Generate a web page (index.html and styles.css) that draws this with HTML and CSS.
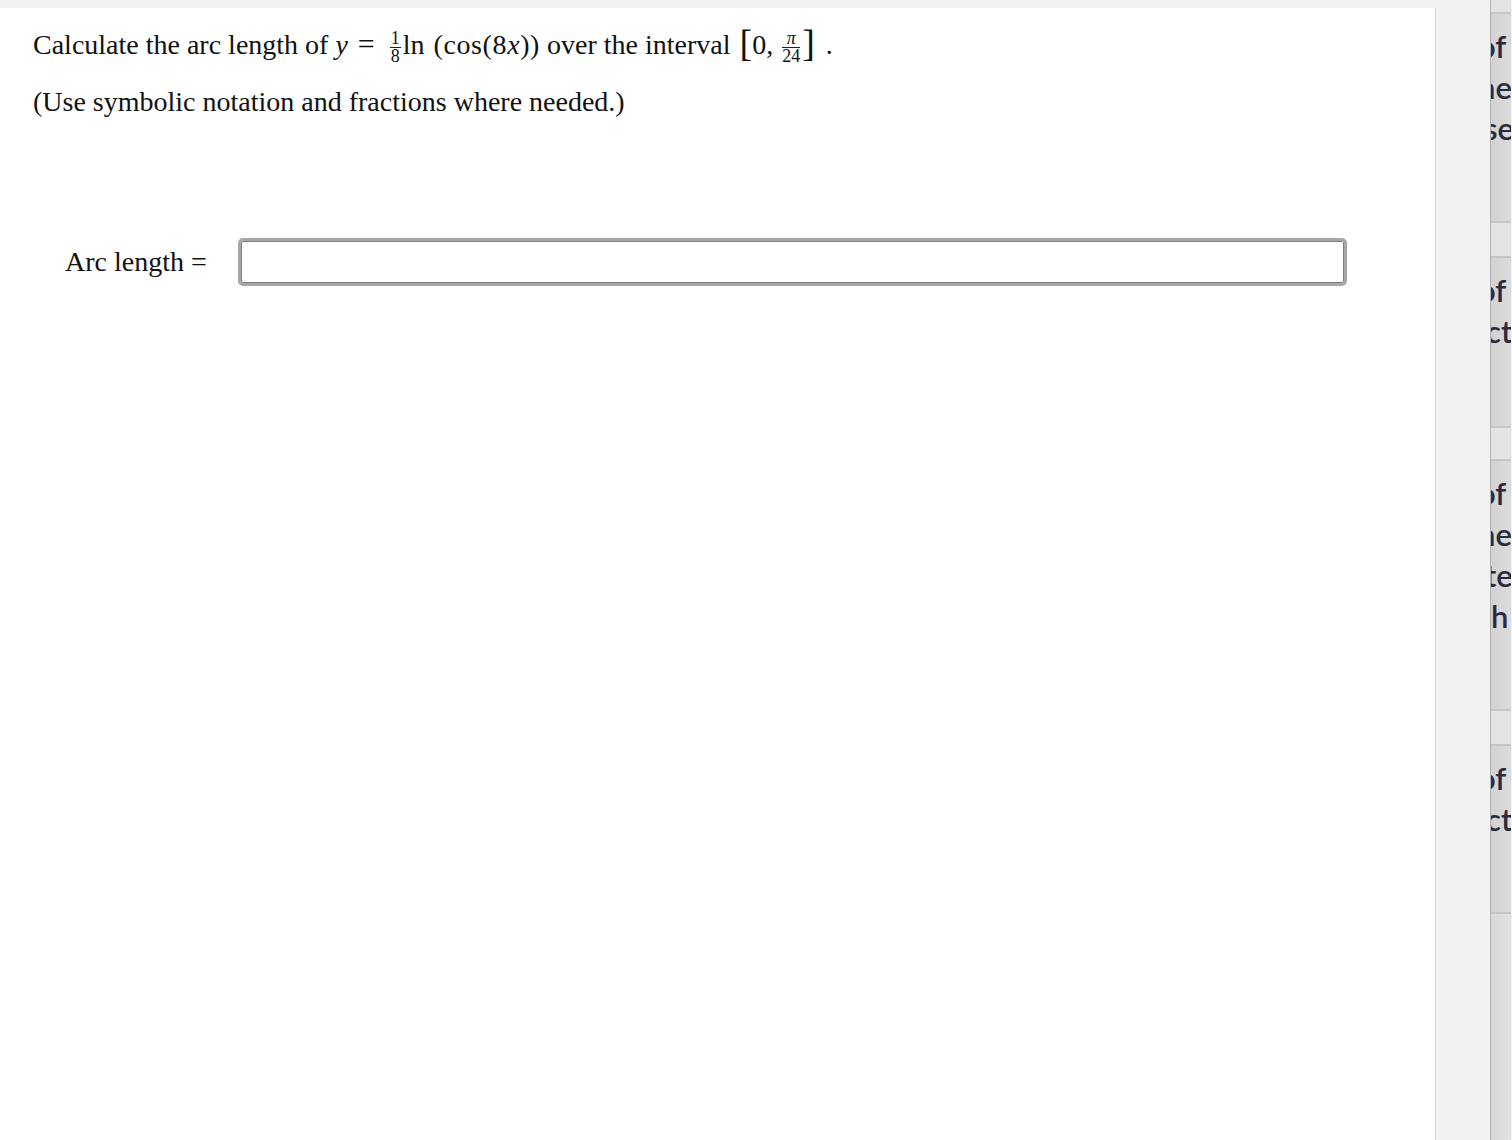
FILE: index.html
```html
<!DOCTYPE html>
<html>
<head>
<meta charset="utf-8">
<link rel="stylesheet" href="styles.css">
</head>
<body>
<div class="layout">
  <main class="main">
    <p class="q">Calculate the arc length of <span class="mi">y</span><span class="mo">=</span><span class="frac"><span class="num">1</span><span class="den">8</span></span><span class="fn">ln</span> <span class="expr">(cos(8<span class="mi">x</span>))</span> over the interval <span class="br bl">[</span>0, <span class="frac frac2"><span class="num"><span class="mi">π</span></span><span class="den">24</span></span><span class="br br2">]</span> .</p>
    <p class="hint">(Use symbolic notation and fractions where needed.)</p>
    <div class="answer">
      <label class="lbl" for="arc">Arc length =</label>
      <input id="arc" class="box" type="text">
    </div>
  </main>
  <div class="gutter"></div>
  <aside class="side">
    <div class="card c1"><div class="w w1">of</div><div class="w w2">ne</div><div class="w w3">se</div></div>
    <div class="gap g1"></div>
    <div class="card c2"><div class="w w1">of</div><div class="w w4">ct</div></div>
    <div class="gap g2"></div>
    <div class="card c3"><div class="w w1">of</div><div class="w w2">ne</div><div class="w w5">te</div><div class="w w6">h</div></div>
    <div class="gap g3"></div>
    <div class="card c4"><div class="w w1">of</div><div class="w w4">ct</div></div>
    <div class="rest"></div>
  </aside>
</div>
</body>
</html>
```
FILE: styles.css
```css
html, body {
  margin: 0;
  padding: 0;
  background: #f2f2f2;
}
.layout {
  display: flex;
  height: 1140px;
  overflow: hidden;
}
.main {
  width: 1436px;
  margin-top: 8px;
  background: #ffffff;
  border-right: 1px solid #dcdcdc;
  font-family: "Liberation Serif", "Times New Roman", serif;
  font-size: 28px;
  color: #111;
  box-sizing: border-box;
  padding-left: 33px;
  padding-top: 1px;
}
.q {
  margin: 19px 0 0 0;
  line-height: 32px;
  white-space: nowrap;
}
.mi { font-style: italic; }
.mo { margin: 0 15px 0 10px; font-size: 30px; }
.fn { margin-left: 1px; }
.expr { letter-spacing: 0.6px; margin-left: 2px; }
.frac {
  display: inline-block;
  text-align: center;
  vertical-align: -8px;
  font-size: 18px;
  line-height: 15px;
  margin-right: 1px;
}
.frac .num {
  display: block;
  border-bottom: 1px solid #222;
  padding: 0 1px 1px;
}
.frac .den {
  display: block;
  padding-top: 1px;
}
.frac2 {
  margin: 0 2px;
}
.br {
  font-size: 38px;
  line-height: 20px;
  vertical-align: -2px;
  font-weight: 300;
}
.bl { margin-left: 2px; }
.br2 { margin-right: 4px; }
.hint {
  margin: 22px 0 0 0;
  line-height: 32px;
  white-space: nowrap;
}
.answer {
  display: flex;
  align-items: center;
  margin-top: 120px;
  padding-left: 32px;
}
.lbl {
  width: 173px;
  line-height: 32px;
}
.box {
  width: 1109px;
  height: 48px;
  box-sizing: border-box;
  border: 3px solid #a7a7a7;
  border-radius: 5px;
  box-shadow: inset 0 0 0 1px #7f7f7f;
  background: #fff;
  outline: none;
  font-size: 22px;
  padding: 0 8px;
}
.gutter {
  width: 54px;
  flex: none;
}
.side {
  width: 21px;
  flex: none;
  background: #e3e3e3;
  border-left: 1px solid #b2b2b2;
  box-sizing: border-box;
  overflow: hidden;
  font-family: Lato, "Noto Sans", sans-serif;
  font-size: 31px;
  color: #2a2a3e;
  display: flex;
  flex-direction: column;
}
.card {
  background: linear-gradient(90deg, #d2d2d2, #dcdcdc);
  border-top: 2px solid #c5c5ce;
  border-bottom: 2px solid #c5c5ce;
  box-sizing: border-box;
  white-space: nowrap;
  padding-top: 12px;
}
.c1 { height: 211px; margin-top: 12px; }
.c2 { height: 172px; }
.c3 { height: 252px; }
.c4 { height: 170px; }
.gap { background: #e4e4e4; }
.g1 { height: 33px; }
.g2 { height: 31px; }
.g3 { height: 33px; }
.rest { flex: 1; background: linear-gradient(90deg, #d8d8d8, #e2e2e2); }
.w {
  line-height: 41px;
  font-weight: 600;
}
.w1 { margin-left: -13px; }
.w2 { margin-left: -13px; }
.w3 { margin-left: -7px; }
.w4 { margin-left: -5px; }
.w5 { margin-left: -6px; }
.w6 { margin-left: 0px; }
```
